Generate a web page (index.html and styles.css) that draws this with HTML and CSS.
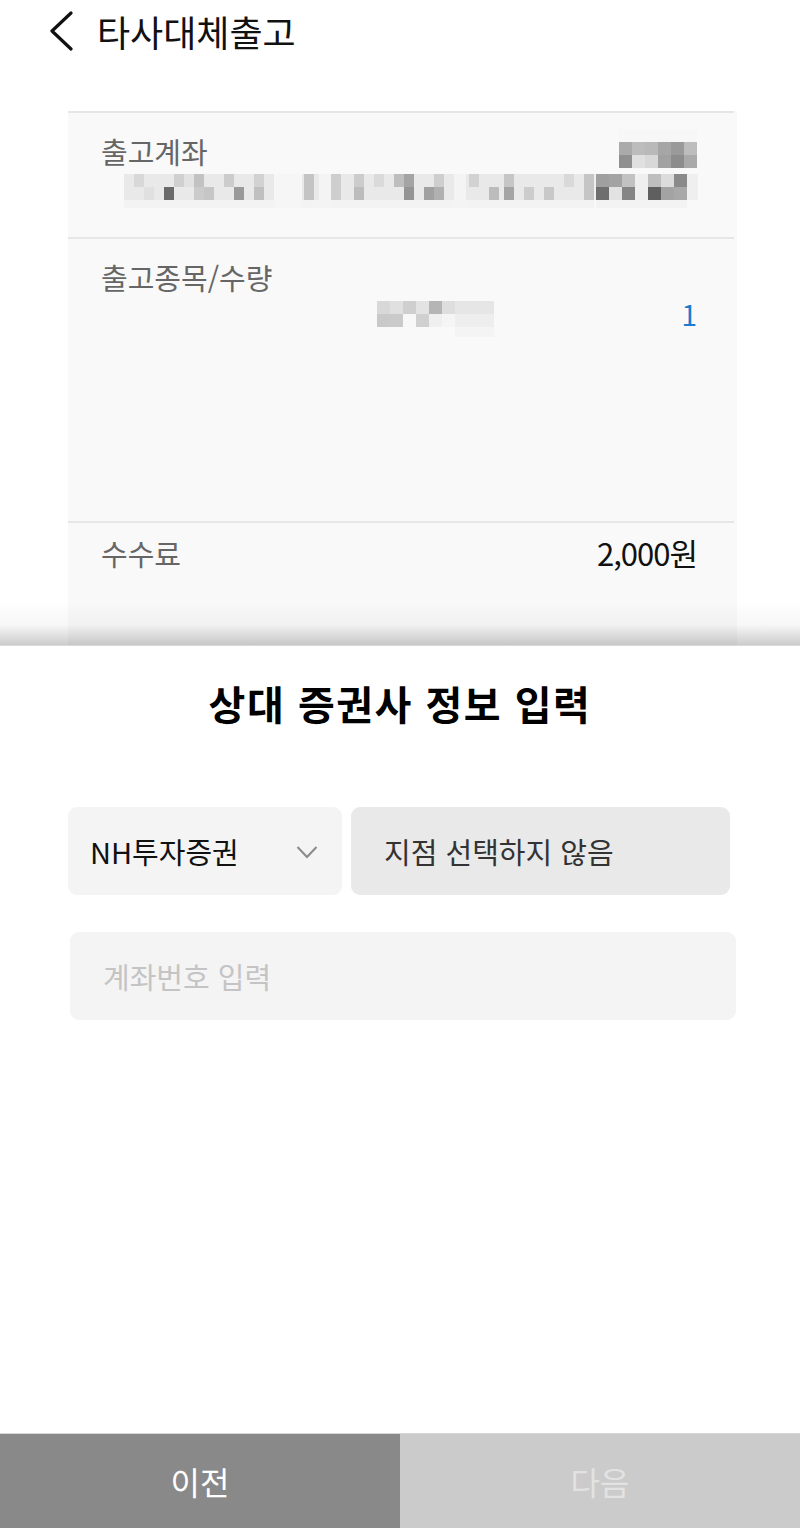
FILE: index.html
```html
<!DOCTYPE html>
<html lang="ko">
<head>
<meta charset="utf-8">
<title>타사대체출고</title>
<link rel="stylesheet" href="styles.css">
</head>
<body>
<div class="page">
  <header class="header">
    <svg class="back" width="26" height="40" viewBox="0 0 26 40"><path d="M23 2 L4 20 L23 38" fill="none" stroke="#111" stroke-width="3.2" stroke-linecap="round" stroke-linejoin="round"/></svg>
    <h1 class="title">타사대체출고</h1>
  </header>

  <section class="card">
    <div class="row row-account">
      <div class="row-top">
        <span class="label">출고계좌</span>
        <svg class="blur blur-name" width="78" height="40" viewBox="0 0 78 40">
          <rect x="0" y="0" width="78" height="40" fill="#f7f7f7"/>
          <rect x="0" y="13" width="13" height="13" fill="#aaaaaa"/>
          <rect x="13" y="13" width="13" height="13" fill="#bcbcbc"/>
          <rect x="26" y="13" width="13" height="13" fill="#b9b9b9"/>
          <rect x="39" y="13" width="13" height="13" fill="#a6a6a6"/>
          <rect x="52" y="13" width="13" height="13" fill="#9a9a9a"/>
          <rect x="65" y="13" width="13" height="13" fill="#bdbdbd"/>
          <rect x="0" y="26" width="13" height="13" fill="#8f8f8f"/>
          <rect x="13" y="26" width="13" height="13" fill="#e0e0e0"/>
          <rect x="26" y="26" width="13" height="13" fill="#d8d8d8"/>
          <rect x="39" y="26" width="13" height="13" fill="#a1a1a1"/>
          <rect x="52" y="26" width="13" height="13" fill="#8c8c8c"/>
          <rect x="65" y="26" width="13" height="13" fill="#a9a9a9"/>
        </svg>
      </div>
      <svg class="blur blur-account" width="574" height="40" viewBox="0 0 574 40">
        <rect x="0" y="0" width="574" height="40" fill="#f9f9f9"/>
        <rect x="0" y="4" width="470" height="26" fill="#e9e9e9"/>
        <rect x="0" y="30" width="470" height="8" fill="#f3f3f3"/>
        <rect x="10" y="4" width="10" height="13" fill="#d8d8d8"/>
        <rect x="20" y="17" width="10" height="13" fill="#e0e0e0"/>
        <rect x="40" y="17" width="10" height="13" fill="#6a6a6a"/>
        <rect x="50" y="4" width="10" height="13" fill="#d0d0d0"/>
        <rect x="60" y="4" width="10" height="13" fill="#e2e2e2"/>
        <rect x="70" y="4" width="10" height="13" fill="#c2c2c2"/>
        <rect x="70" y="17" width="10" height="13" fill="#cbcbcb"/>
        <rect x="80" y="17" width="10" height="13" fill="#c6c6c6"/>
        <rect x="100" y="4" width="10" height="13" fill="#cccccc"/>
        <rect x="110" y="17" width="10" height="13" fill="#9a9a9a"/>
        <rect x="130" y="4" width="10" height="13" fill="#d2d2d2"/>
        <rect x="130" y="17" width="10" height="13" fill="#c0c0c0"/>
        <rect x="150" y="4" width="28" height="34" fill="#f6f6f6"/>
        <rect x="180" y="4" width="10" height="26" fill="#c4c4c4"/>
        <rect x="195" y="4" width="12" height="34" fill="#f4f4f4"/>
        <rect x="207" y="4" width="10" height="26" fill="#cecece"/>
        <rect x="230" y="4" width="10" height="13" fill="#cccccc"/>
        <rect x="230" y="17" width="10" height="13" fill="#bcbcbc"/>
        <rect x="250" y="4" width="10" height="13" fill="#dadada"/>
        <rect x="270" y="4" width="10" height="13" fill="#bebebe"/>
        <rect x="280" y="4" width="10" height="13" fill="#a4a4a4"/>
        <rect x="280" y="17" width="10" height="13" fill="#949494"/>
        <rect x="300" y="17" width="10" height="13" fill="#a0a0a0"/>
        <rect x="310" y="4" width="10" height="13" fill="#cecece"/>
        <rect x="310" y="17" width="10" height="13" fill="#b0b0b0"/>
        <rect x="330" y="4" width="12" height="34" fill="#f4f4f4"/>
        <rect x="345" y="4" width="10" height="13" fill="#d2d2d2"/>
        <rect x="365" y="17" width="10" height="13" fill="#bcbcbc"/>
        <rect x="380" y="4" width="10" height="13" fill="#c6c6c6"/>
        <rect x="380" y="17" width="10" height="13" fill="#a4a4a4"/>
        <rect x="400" y="17" width="10" height="13" fill="#cccccc"/>
        <rect x="420" y="17" width="10" height="13" fill="#c8c8c8"/>
        <rect x="440" y="4" width="10" height="13" fill="#d9d9d9"/>
        <rect x="460" y="4" width="10" height="26" fill="#c5c5c5"/>
        <rect x="470" y="4" width="104" height="26" fill="#efefef"/>
        <rect x="472" y="4" width="13" height="13" fill="#9f9f9f"/>
        <rect x="485" y="4" width="13" height="13" fill="#a3a3a3"/>
        <rect x="498" y="4" width="13" height="13" fill="#c2c2c2"/>
        <rect x="524" y="4" width="13" height="13" fill="#bebebe"/>
        <rect x="537" y="4" width="13" height="13" fill="#dcdcdc"/>
        <rect x="550" y="4" width="13" height="13" fill="#8a8a8a"/>
        <rect x="472" y="17" width="13" height="13" fill="#6e6e6e"/>
        <rect x="485" y="17" width="13" height="13" fill="#e2e2e2"/>
        <rect x="498" y="17" width="13" height="13" fill="#858585"/>
        <rect x="524" y="17" width="13" height="13" fill="#5f5f5f"/>
        <rect x="537" y="17" width="13" height="13" fill="#a3a3a3"/>
        <rect x="550" y="17" width="13" height="13" fill="#a8a8a8"/>
        <rect x="472" y="30" width="91" height="8" fill="#f3f3f3"/>
      </svg>
    </div>

    <div class="row row-stock">
      <span class="label">출고종목/수량</span>
      <div class="stock-line">
        <svg class="blur blur-stock" width="117" height="40" viewBox="0 0 117 40">
          <rect x="0" y="0" width="117" height="13" fill="#e6e6e6"/>
          <rect x="0" y="0" width="13" height="13" fill="#d8d8d8"/>
          <rect x="13" y="0" width="13" height="13" fill="#e0e0e0"/>
          <rect x="26" y="0" width="13" height="13" fill="#cfcfcf"/>
          <rect x="39" y="0" width="13" height="13" fill="#e3e3e3"/>
          <rect x="52" y="0" width="13" height="13" fill="#b5b5b5"/>
          <rect x="65" y="0" width="13" height="13" fill="#dedede"/>
          <rect x="0" y="13" width="13" height="13" fill="#c9c9c9"/>
          <rect x="13" y="13" width="13" height="13" fill="#cacaca"/>
          <rect x="26" y="13" width="13" height="13" fill="#f8f8f8"/>
          <rect x="39" y="13" width="13" height="13" fill="#d0d0d0"/>
          <rect x="52" y="13" width="13" height="13" fill="#efefef"/>
          <rect x="65" y="13" width="13" height="13" fill="#f5f5f5"/>
          <rect x="78" y="13" width="39" height="13" fill="#eeeeee"/>
          <rect x="78" y="26" width="39" height="10" fill="#f4f4f4"/>
        </svg>
        <span class="qty">1</span>
      </div>
    </div>

    <div class="row row-fee">
      <span class="label">수수료</span>
      <span class="value">2,000원</span>
    </div>
  </section>

  <section class="sheet">
    <h2 class="sheet-title">상대 증권사 정보 입력</h2>
    <div class="select-row">
      <div class="select">
        <span>NH투자증권</span>
        <svg class="caret" width="22" height="14" viewBox="0 0 22 14"><path d="M1.5 2 L11 12 L20.5 2" fill="none" stroke="#8a8a8a" stroke-width="2"/></svg>
      </div>
      <div class="branch">지점 선택하지 않음</div>
    </div>
    <div class="account-input">계좌번호 입력</div>
    <div class="buttons">
      <button class="btn btn-prev">이전</button>
      <button class="btn btn-next">다음</button>
    </div>
  </section>
</div>
</body>
</html>
```

FILE: styles.css
```css
* { box-sizing: border-box; }
html, body { margin: 0; padding: 0; }
body {
  font-family: "Noto Sans CJK KR", "Noto Sans", sans-serif;
  background: #ffffff;
  color: #111;
}
.page {
  position: relative;
  width: 800px;
  height: 1528px;
  overflow: hidden;
}
.header {
  display: flex;
  align-items: center;
  height: 62px;
  padding-left: 48px;
  gap: 23px;
}
.back { display: block; }
.title {
  margin: 0;
  font-size: 36px;
  font-weight: 400;
  color: #111;
  line-height: 1;
}
.card {
  margin: 49px 63px 0 68px;
  background: #f9f9f9;
  height: 700px;
}
.row {
  border-top: 2px solid #e6e6e6;
  margin-right: 3px;
  padding: 20px 37px 0 33px;
}
.label {
  font-size: 29px;
  color: #666;
  line-height: 36px;
}
.row-account { height: 126px; }
.row-top {
  display: flex;
  justify-content: space-between;
  align-items: flex-start;
}
.blur { display: block; }
.blur-name { margin-top: -4px; }
.blur-account { margin: 1px 0 0 23px; }
.row-stock { height: 284px; }
.stock-line {
  display: flex;
  align-items: flex-start;
  justify-content: space-between;
  padding-left: 276px;
  margin-top: 6px;
}
.qty {
  font-size: 28px;
  color: #1a7ccc;
  line-height: 30px;
  margin-top: -2px;
}
.row-fee {
  display: flex;
  justify-content: space-between;
  padding-top: 12px;
}
.value {
  font-size: 31px;
  color: #111;
  line-height: 36px;
  letter-spacing: -1px;
}
.sheet {
  position: absolute;
  left: 0;
  right: 0;
  top: 645px;
  bottom: 0;
  background: #fff;
  border-top: 1px solid #dadada;
  display: flex;
  flex-direction: column;
}
.sheet::before {
  content: "";
  position: absolute;
  left: 0;
  right: 0;
  top: -46px;
  height: 45px;
  background: linear-gradient(to bottom, rgba(0,0,0,0) 0%, rgba(0,0,0,0.03) 55%, rgba(0,0,0,0.2) 100%);
}
.sheet-title {
  margin: 32px 0 0;
  text-align: center;
  font-size: 40px;
  font-weight: 700;
  line-height: 50px;
  color: #000;
  letter-spacing: 1.5px;
}
.select-row {
  display: flex;
  gap: 9px;
  margin: 79px 70px 0 68px;
  height: 88px;
}
.select {
  width: 274px;
  background: #f4f4f4;
  border-radius: 9px;
  display: flex;
  align-items: center;
  justify-content: space-between;
  padding: 0 24px 0 22px;
  font-size: 29px;
  color: #111;
}
.caret { margin-top: 2px; }
.branch {
  flex: 1;
  background: #e9e9e9;
  border-radius: 9px;
  display: flex;
  align-items: center;
  padding-left: 33px;
  font-size: 29px;
  color: #333;
}
.account-input {
  margin: 37px 64px 0 70px;
  height: 88px;
  background: #f4f4f4;
  border-radius: 9px;
  display: flex;
  align-items: center;
  padding-left: 33px;
  font-size: 29px;
  color: #c4c4c4;
}
.buttons {
  margin-top: auto;
  display: flex;
  height: 95px;
  border-top: 1px solid #d8d8d8;
}
.btn {
  flex: 1;
  border: 0;
  margin: 0;
  font-family: inherit;
  font-size: 32px;
  line-height: 1;
}
.btn-prev { background: #898989; color: #fff; }
.btn-next { background: #cbcbcb; color: #e2e2e2; }
```
